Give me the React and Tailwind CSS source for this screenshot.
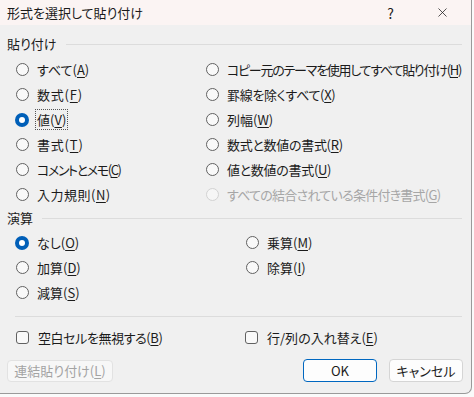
import { X } from 'lucide-react'

const font = { fontFamily: '"Noto Sans CJK JP", "Noto Sans", sans-serif' }

const pasteLeft = [
	{ label: ['すべて(', 'A', ')'] },
	{ label: ['数式(', 'F', ')'], track: 'tracking-[0.8px]' },
	{ label: ['値(', 'V', ')'], checked: true, focus: true },
	{ label: ['書式(', 'T', ')'], track: 'tracking-[0.8px]' },
	{ label: ['コメントとメモ(', 'C', ')'], track: 'tracking-[-1.4px]' },
	{ label: ['入力規則(', 'N', ')'], track: 'tracking-[0.5px]' },
]

const pasteRight = [
	{ label: ['コピー元のテーマを使用してすべて貼り付け(', 'H', ')'], track: 'tracking-[-1.25px]' },
	{ label: ['罫線を除くすべて(', 'X', ')'], track: 'tracking-[-0.3px]' },
	{ label: ['列幅(', 'W', ')'] },
	{ label: ['数式と数値の書式(', 'R', ')'], track: 'tracking-[-0.3px]' },
	{ label: ['値と数値の書式(', 'U', ')'], track: 'tracking-[-0.3px]' },
	{ label: ['すべての結合されている条件付き書式(', 'G', ')'], disabled: true, track: 'tracking-[-0.75px]' },
]

const opLeft = [
	{ label: ['なし(', 'O', ')'], checked: true },
	{ label: ['加算(', 'D', ')'] },
	{ label: ['減算(', 'S', ')'] },
]

const opRight = [
	{ label: ['乗算(', 'M', ')'] },
	{ label: ['除算(', 'I', ')'] },
]

function Label({ label, focus }) {
	return (
		<span className={`px-[1px] leading-[16px] ${focus ? 'outline outline-1 outline-dotted outline-[#555]' : ''}`}>
			{label[0]}
			<span className="underline underline-offset-2">{label[1]}</span>
			{label[2]}
		</span>
	)
}

function Radio({ label, checked, disabled, focus, track }) {
	return (
		<div className={`flex items-center h-[25px] ${disabled ? 'text-[#a6a6a6]' : 'text-[#1b1b1b]'}`}>
			<div className="w-[14px] h-[14px] flex items-center justify-center shrink-0">
				{checked ? (
					<div className="w-[14px] h-[14px] rounded-full bg-[#005fb8] flex items-center justify-center">
						<div className="w-[6px] h-[6px] rounded-full bg-white" />
					</div>
				) : (
					<div
						className={`w-[13px] h-[13px] rounded-full border ${disabled ? 'border-[#d2d2d2] bg-[#f6f6f6]' : 'border-[#616161] bg-[#f9f9f9]'}`}
					/>
				)}
			</div>
			<div className={`ml-[7px] whitespace-nowrap ${track || ''}`}>
				<Label label={label} focus={focus} />
			</div>
		</div>
	)
}

function Checkbox({ label, track }) {
	return (
		<div className="flex items-center h-[25px] text-[#1b1b1b]">
			<div className="w-[13px] h-[13px] rounded-[3px] border border-[#616161] bg-[#f9f9f9] shrink-0" />
			<div className={`ml-[8px] whitespace-nowrap ${track || ''}`}>
				<Label label={label} />
			</div>
		</div>
	)
}

function GroupHeader({ title }) {
	return (
		<div className="flex items-center h-[16px]">
			<span className="text-[#1b1b1b]">{title}</span>
			<div className="flex-1 h-px bg-[#dcdcdc] ml-[9px] mr-[1px]" />
		</div>
	)
}

export default function App() {
	return (
		<div className="w-[474px] h-[397px] bg-[#fafafa] overflow-hidden" style={font}>
			<div className="w-[472px] h-[394px] bg-[#f0f0f0] border-r border-b border-[#9a9a9a] rounded-br-[7px] overflow-hidden text-[13px] [font-feature-settings:'palt'] flex flex-col">
				{/* title bar */}
				<div className="h-[25px] bg-[#fbf4f3] flex items-center pl-[7px] shrink-0">
					<span className="text-[#1b1b1b] leading-none">形式を選択して貼り付け</span>
					<span className="ml-auto mr-[41px] text-[#1b1b1b] text-[14px] leading-none">?</span>
					<X className="w-[15px] h-[15px] text-[#1b1b1b] mr-[21px]" strokeWidth={1.2} />
				</div>

				<div className="pl-[7px] pr-[8px] pt-[11px] flex flex-col">
					<GroupHeader title="貼り付け" />
					<div className="flex pt-[5px]">
						<div className="w-[198px] shrink-0 pl-[8px] flex flex-col">
							{pasteLeft.map((r) => (
								<Radio key={r.label[1]} {...r} />
							))}
						</div>
						<div className="flex flex-col min-w-0">
							{pasteRight.map((r) => (
								<Radio key={r.label[1]} {...r} />
							))}
						</div>
					</div>

					<div className="pt-[3px]">
						<GroupHeader title="演算" />
					</div>
					<div className="flex pt-[4px]">
						<div className="w-[238px] shrink-0 pl-[8px] flex flex-col">
							{opLeft.map((r) => (
								<Radio key={r.label[1]} {...r} />
							))}
						</div>
						<div className="flex flex-col">
							{opRight.map((r) => (
								<Radio key={r.label[1]} {...r} />
							))}
						</div>
					</div>

					<div className="ml-[8px] mr-[1px] mt-[11px] h-px bg-[#dcdcdc]" />

					<div className="flex pt-[8px]">
						<div className="w-[238px] shrink-0 pl-[9px]">
							<Checkbox label={['空白セルを無視する(', 'B', ')']} track="tracking-[-0.4px]" />
						</div>
						<Checkbox label={['行/列の入れ替え(', 'E', ')']} />
					</div>

					<div className="flex items-center pt-[9px]">
						<button className="h-[22px] w-[106px] rounded-[4px] border border-[#e2e2e2] bg-[#f7f7f7] text-[#a3a3a3] leading-none">
							<Label label={['連結貼り付け(', 'L', ')']} />
						</button>
						<button className="ml-auto h-[23px] w-[74px] rounded-[4px] border border-[#0067c0] bg-[#fdfdfd] text-[#1b1b1b] leading-none">
							OK
						</button>
						<button className="ml-[12px] h-[23px] w-[74px] rounded-[4px] border border-[#d5d5d5] bg-[#fdfdfd] text-[#1b1b1b] leading-none">
							キャンセル
						</button>
					</div>
				</div>
			</div>
		</div>
	)
}
